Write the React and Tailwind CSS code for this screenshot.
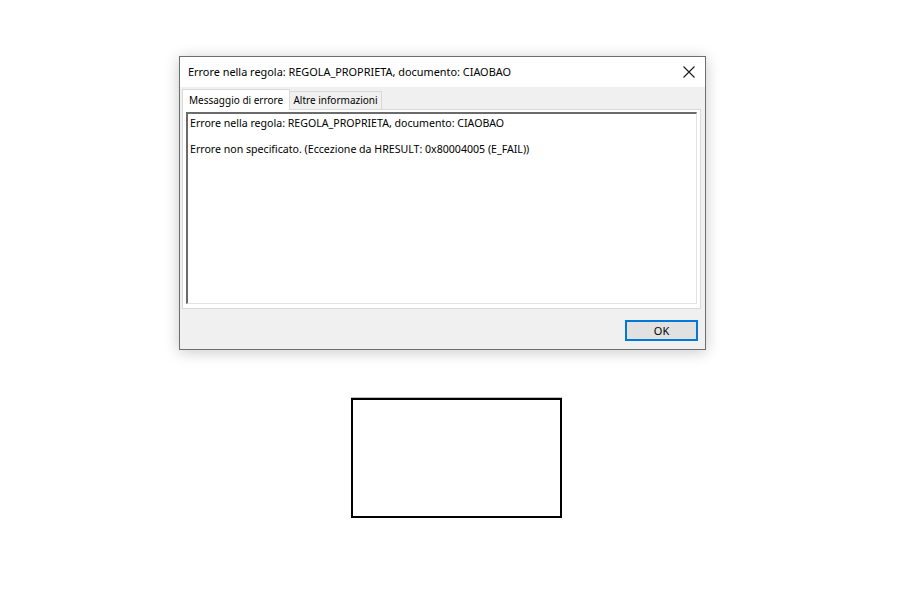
import React from "react";

const font = { fontFamily: '"Noto Sans", "Open Sans", Arial, sans-serif' };

function CloseIcon() {
  return (
    <svg width="12" height="12" viewBox="0 0 12 12" className="block">
      <path d="M0.5 0.5 L11.5 11.5 M11.5 0.5 L0.5 11.5" stroke="#1a1a1a" strokeWidth="1.1" fill="none" />
    </svg>
  );
}

export default function App() {
  return (
    <div className="w-[905px] h-[602px] bg-white overflow-hidden" style={font}>
      <div className="pt-[56px] pl-[179px]">
        {/* dialog window */}
        <div className="w-[527px] h-[294px] border border-[#6e6e6e] bg-[#f0f0f0] flex flex-col shadow-[0_2px_14px_rgba(0,0,0,0.22)]">
          <div className="h-[30px] bg-white flex items-center justify-between pl-[8px] pr-[10px]">
            <span className="text-[10.9px] text-black leading-none">
              Errore nella regola: REGOLA_PROPRIETA, documento: CIAOBAO
            </span>
            <CloseIcon />
          </div>

          {/* tab strip */}
          <div className="flex items-end h-[22px] pl-[2px]">
            <div className="h-[21px] w-[108px] bg-white border border-b-0 border-[#d9d9d9] flex items-center justify-center text-[10px] text-black relative z-10 -mb-px">
              Messaggio di errore
            </div>
            <div className="h-[18px] w-[92px] bg-[#f0f0f0] border border-b-0 border-l-0 border-[#d9d9d9] flex items-center justify-center text-[10px] text-black">
              Altre informazioni
            </div>
          </div>

          {/* tab page */}
          <div className="ml-[2px] mr-[4px] h-[200px] bg-white border border-[#d9d9d9] px-[3px] pt-[2px] pb-[4px]">
            <div className="h-full border-l-2 border-t-2 border-r border-b border-l-[#6b6b6b] border-t-[#6b6b6b] border-r-[#e3e3e3] border-b-[#e3e3e3] pl-[2px] pt-[2px] text-[10.6px] text-black leading-[15px]">
              <div>Errore nella regola: REGOLA_PROPRIETA, documento: CIAOBAO</div>
              <div className="mt-[11px]">Errore non specificato. (Eccezione da HRESULT: 0x80004005 (E_FAIL))</div>
            </div>
          </div>

          <div className="flex justify-end pr-[7px] pt-[11px]">
            <button className="w-[73px] h-[21px] border-2 border-[#0078d7] bg-[#e1e1e1] text-[11px] text-black leading-none flex items-center justify-center">
              OK
            </button>
          </div>
        </div>
      </div>

      {/* empty frame below the dialog */}
      <div className="ml-[351px] mt-[48px] w-[211px] h-[120px] border-2 border-black bg-white shadow-[0_-1px_0_#bdbdbd]" />
    </div>
  );
}
